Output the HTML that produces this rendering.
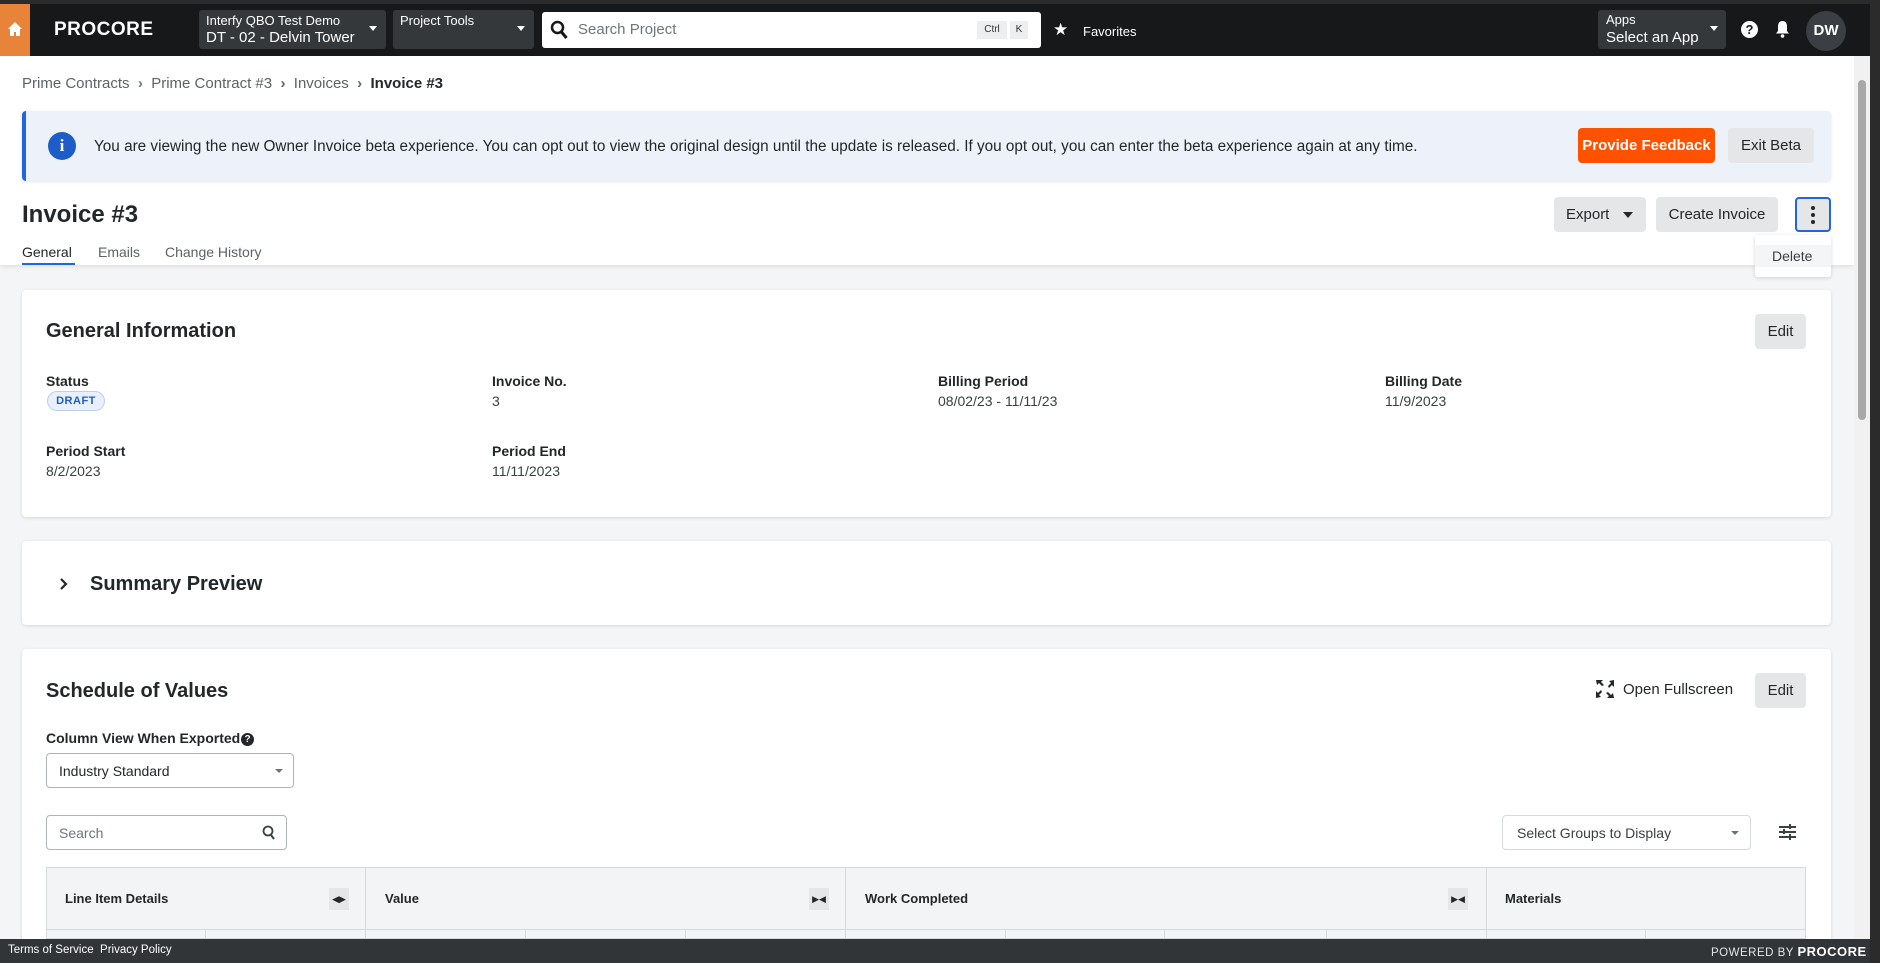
<!DOCTYPE html>
<html><head><meta charset="utf-8"><style>
*{box-sizing:border-box;margin:0;padding:0}
body{width:1880px;height:963px;overflow:hidden;background:#2b2b2b;font-family:"Liberation Sans",sans-serif;color:#232729;position:relative}
.a{position:absolute}
.top{left:0;top:4px;width:1870px;height:52px;background:#16181a}
.page{left:0;top:56px;width:1854px;height:883px;background:#f4f5f6;overflow:hidden}
.hdr{left:0;top:0;width:1854px;height:209px;background:#fff;box-shadow:0 2px 4px rgba(0,0,0,.08)}
.dd{background:#34383b;border-radius:3px;color:#fff}
.card{background:#fff;border-radius:4px;box-shadow:0 1px 3px rgba(0,0,0,.12)}
.btn{background:#e4e6e8;border-radius:4px;font-size:15px;color:#232729;display:flex;align-items:center;justify-content:center}
.lbl{font-size:14px;font-weight:bold}
.val{font-size:14px;color:#3b4043}
.h2{font-size:20px;font-weight:bold;color:#232729}
.th{font-size:13px;font-weight:bold}
.vl{width:1px;background:#d6dadc}
</style></head><body>
<div class="a top"></div>
<div class="a" style="left:0;top:4px;width:30px;height:52px;background:#e8843a"></div>
<svg class="a" style="left:7px;top:21px" width="16" height="16" viewBox="0 0 16 16"><path d="M8 1L1 8h2v7h4v-4h2v4h4V8h2z" fill="#fff"/></svg>
<div class="a" style="left:54px;top:19px;font-size:19px;font-weight:bold;color:#fff;letter-spacing:0.5px">PROCORE</div>
<div class="a dd" style="left:199px;top:10px;width:187px;height:39px"><div class="a" style="left:7px;top:3px;font-size:13px">Interfy QBO Test Demo</div><div class="a" style="left:7px;top:19px;font-size:15px">DT - 02 - Delvin Tower</div><div class="a" style="left:170px;top:16px;border:4px solid transparent;border-top:5px solid #fff"></div></div>
<div class="a dd" style="left:393px;top:10px;width:141px;height:39px"><div class="a" style="left:7px;top:3px;font-size:13px">Project Tools</div><div class="a" style="left:124px;top:16px;border:4px solid transparent;border-top:5px solid #fff"></div></div>
<div class="a" style="left:542px;top:12px;width:499px;height:36px;background:#fff;border-radius:3px"></div>
<svg class="a" style="left:550px;top:20px" width="18" height="20" viewBox="0 0 18 20"><circle cx="7.5" cy="7.5" r="5.5" stroke="#16181a" stroke-width="2.5" fill="none"/><path d="M11.5 12l5 6" stroke="#16181a" stroke-width="3"/></svg>
<div class="a" style="left:578px;top:21px;font-size:15px;color:#6a767c">Search Project</div>
<div class="a" style="left:977px;top:21px;width:30px;height:18px;background:#eceeef;font-size:10px;text-align:center;line-height:18px;color:#333">Ctrl</div>
<div class="a" style="left:1010px;top:21px;width:18px;height:18px;background:#eceeef;font-size:10px;text-align:center;line-height:18px;color:#333">K</div>
<div class="a" style="left:1053px;top:20px;font-size:17px;color:#fff">★</div>
<div class="a" style="left:1083px;top:24px;font-size:13px;color:#fff">Favorites</div>
<div class="a dd" style="left:1598px;top:10px;width:128px;height:39px"><div class="a" style="left:8px;top:2px;font-size:13px">Apps</div><div class="a" style="left:8px;top:19px;font-size:15px">Select an App</div><div class="a" style="left:112px;top:16px;border:4px solid transparent;border-top:5px solid #fff"></div></div>
<div class="a" style="left:1741px;top:21px;width:17px;height:17px;background:#fff;border-radius:50%;color:#16181a;font-size:13px;font-weight:bold;text-align:center;line-height:17px">?</div>
<svg class="a" style="left:1775px;top:20px" width="15" height="18" viewBox="0 0 15 18"><path d="M7.5 1C4.5 1 3 3.5 3 6v5l-2 2.5h13L12 11V6c0-2.5-1.5-5-4.5-5z" fill="#fff"/><circle cx="7.5" cy="16" r="1.8" fill="#fff"/></svg>
<div class="a" style="left:1806px;top:11px;width:40px;height:40px;border-radius:50%;background:#3b3e42;color:#fff;font-size:15px;font-weight:bold;text-align:center;line-height:40px">DW</div>

<div class="a page">
<div class="a hdr"></div>
<div class="a" style="left:22px;top:19px;font-size:15px;color:#5a6368">Prime Contracts&nbsp;&nbsp;<b style="color:#6a767c">›</b>&nbsp;&nbsp;Prime Contract #3&nbsp;&nbsp;<b>›</b>&nbsp;&nbsp;Invoices&nbsp;&nbsp;<b>›</b>&nbsp;&nbsp;<span style="color:#232729;font-weight:bold">Invoice #3</span></div>
<div class="a" style="left:22px;top:55px;width:1809px;height:70px;background:#edf2fa;border-left:4px solid #2066df;border-radius:4px;box-shadow:0 1px 3px rgba(0,0,0,.1)"></div>
<div class="a" style="left:48px;top:76px;width:28px;height:28px;border-radius:50%;background:#1d5cc9;color:#fff;font-family:'Liberation Serif',serif;font-weight:bold;font-size:17px;text-align:center;line-height:28px">i</div>
<div class="a" style="left:94px;top:82px;font-size:15.3px;color:#232729">You are viewing the new Owner Invoice beta experience. You can opt out to view the original design until the update is released. If you opt out, you can enter the beta experience again at any time.</div>
<div class="a btn" style="left:1578px;top:72px;width:137px;height:35px;background:#ff5200;color:#fff;font-weight:bold">Provide Feedback</div>
<div class="a btn" style="left:1728px;top:72px;width:86px;height:35px">Exit Beta</div>
<div class="a" style="left:22px;top:145px;font-size:24px;font-weight:bold">Invoice #3</div>
<div class="a" style="left:22px;top:188px;font-size:14px">General</div>
<div class="a" style="left:22px;top:207px;width:53px;height:2px;background:#2066df"></div>
<div class="a" style="left:98px;top:188px;font-size:14px;color:#5a6368">Emails</div>
<div class="a" style="left:165px;top:188px;font-size:14px;color:#5a6368">Change History</div>
<div class="a btn" style="left:1554px;top:141px;width:92px;height:35px;justify-content:flex-start;padding-left:12px">Export<span style="margin-left:14px;border:5px solid transparent;border-top:6px solid #232729;margin-top:6px"></span></div>
<div class="a btn" style="left:1656px;top:141px;width:122px;height:35px">Create Invoice</div>
<div class="a btn" style="left:1795px;top:141px;width:36px;height:35px;border:2px solid #2066df;flex-direction:column;gap:3px"><i style="width:4px;height:4px;border-radius:50%;background:#232729"></i><i style="width:4px;height:4px;border-radius:50%;background:#232729"></i><i style="width:4px;height:4px;border-radius:50%;background:#232729"></i></div>
<div class="a" style="left:1755px;top:179px;width:76px;height:42px;background:#fff;box-shadow:0 1px 4px rgba(0,0,0,.15);border-radius:3px"><div style="margin-top:10px;height:22px;background:#f4f5f6;font-size:14px;color:#3b4043;padding:3px 0 0 17px">Delete</div></div>

<div class="a card" style="left:22px;top:234px;width:1809px;height:227px"></div>
<div class="a h2" style="left:46px;top:264px">General Information</div>
<div class="a btn" style="left:1755px;top:258px;width:51px;height:35px">Edit</div>
<div class="a lbl" style="left:46px;top:317px">Status</div>
<div class="a" style="left:47px;top:335px;width:58px;height:20px;border:1px solid #b9d0f3;background:#e9f0fb;border-radius:10px;font-size:11px;font-weight:bold;color:#1d5cc9;text-align:center;line-height:18px;letter-spacing:.5px">DRAFT</div>
<div class="a lbl" style="left:492px;top:317px">Invoice No.</div><div class="a val" style="left:492px;top:337px">3</div>
<div class="a lbl" style="left:938px;top:317px">Billing Period</div><div class="a val" style="left:938px;top:337px">08/02/23 - 11/11/23</div>
<div class="a lbl" style="left:1385px;top:317px">Billing Date</div><div class="a val" style="left:1385px;top:337px">11/9/2023</div>
<div class="a lbl" style="left:46px;top:387px">Period Start</div><div class="a val" style="left:46px;top:407px">8/2/2023</div>
<div class="a lbl" style="left:492px;top:387px">Period End</div><div class="a val" style="left:492px;top:407px">11/11/2023</div>

<div class="a card" style="left:22px;top:485px;width:1809px;height:84px"></div>
<svg class="a" style="left:59px;top:521px" width="10" height="14" viewBox="0 0 10 14"><path d="M2 2l5 5-5 5" stroke="#232729" stroke-width="2.2" fill="none"/></svg>
<div class="a h2" style="left:90px;top:517px">Summary Preview</div>

<div class="a card" style="left:22px;top:593px;width:1809px;height:300px"></div>
<div class="a h2" style="left:46px;top:624px">Schedule of Values</div>
<svg class="a" style="left:1595px;top:623px" width="20" height="20" viewBox="0 0 20 20" fill="#232729"><path d="M1 1h7L6 3l3 3-2 1-3-3-2 2z"/><path d="M19 1v7l-2-2-3 3-1-2 3-3-2-2z"/><path d="M1 19v-7l2 2 3-3 1 2-3 3 2 2z"/><path d="M19 19h-7l2-2-3-3 2-1 3 3 2-2z"/></svg>
<div class="a" style="left:1623px;top:625px;font-size:15px;color:#232729">Open Fullscreen</div>
<div class="a btn" style="left:1755px;top:617px;width:51px;height:35px">Edit</div>
<div class="a lbl" style="left:46px;top:674px">Column View When Exported <span style="display:inline-block;width:13px;height:13px;border-radius:50%;background:#232729;color:#fff;font-size:10px;text-align:center;line-height:13px;vertical-align:1px;margin-left:-3px">?</span></div>
<div class="a" style="left:46px;top:697px;width:248px;height:35px;border:1px solid #acb5b9;border-radius:4px;background:#fff;font-size:14px;padding:9px 0 0 12px">Industry Standard<span class="a" style="left:228px;top:15px;border:4px solid transparent;border-top:4px solid #6a767c"></span></div>
<div class="a" style="left:46px;top:759px;width:241px;height:35px;border:1px solid #acb5b9;border-radius:4px;background:#fff;font-size:14px;color:#6a767c;padding:9px 0 0 12px">Search</div>
<svg class="a" style="left:262px;top:769px" width="14" height="16" viewBox="0 0 14 16"><circle cx="6" cy="6" r="4.5" stroke="#3b4043" stroke-width="1.8" fill="none"/><path d="M9 10l3 4" stroke="#3b4043" stroke-width="2"/></svg>
<div class="a" style="left:1502px;top:759px;width:249px;height:35px;border:1px solid #d6dadc;border-radius:4px;background:#fff;font-size:14px;color:#3b4043;padding:9px 0 0 14px">Select Groups to Display<span class="a" style="left:228px;top:15px;border:4px solid transparent;border-top:4px solid #6a767c"></span></div>
<svg class="a" style="left:1779px;top:768px" width="17" height="16" viewBox="0 0 17 16" fill="#3b4043"><rect x="0" y="2" width="17" height="2"/><rect x="0" y="7" width="17" height="2"/><rect x="0" y="12" width="17" height="2"/><rect x="10" y="0" width="2" height="5"/><rect x="4" y="5" width="2" height="5"/><rect x="10" y="10" width="2" height="6"/></svg>
<div class="a" style="left:46px;top:811px;width:1760px;height:72px;background:#f3f4f5;border:1px solid #d6dadc"></div>
<div class="a vl" style="left:365px;top:811px;height:72px"></div>
<div class="a vl" style="left:845px;top:811px;height:72px"></div>
<div class="a vl" style="left:1486px;top:811px;height:72px"></div>
<div class="a" style="left:46px;top:873px;width:1760px;height:1px;background:#d6dadc"></div>
<div class="a vl" style="left:205px;top:873px;height:10px"></div><div class="a vl" style="left:525px;top:873px;height:10px"></div><div class="a vl" style="left:685px;top:873px;height:10px"></div><div class="a vl" style="left:1005px;top:873px;height:10px"></div><div class="a vl" style="left:1164px;top:873px;height:10px"></div><div class="a vl" style="left:1326px;top:873px;height:10px"></div><div class="a vl" style="left:1645px;top:873px;height:10px"></div>
<div class="a th" style="left:65px;top:835px">Line Item Details</div>
<div class="a th" style="left:385px;top:835px">Value</div>
<div class="a th" style="left:865px;top:835px">Work Completed</div>
<div class="a th" style="left:1505px;top:835px">Materials</div>
<div class="a" style="left:329px;top:832px;width:20px;height:22px;background:#e4e6e8;font-size:9px;text-align:center;line-height:22px">◀▶</div>
<div class="a" style="left:809px;top:832px;width:20px;height:22px;background:#e4e6e8;font-size:9px;text-align:center;line-height:22px">▶◀</div>
<div class="a" style="left:1448px;top:832px;width:20px;height:22px;background:#e4e6e8;font-size:9px;text-align:center;line-height:22px">▶◀</div>
</div>
<div class="a" style="left:1854px;top:56px;width:16px;height:883px;background:#f1f1f1"></div>
<div class="a" style="left:1858px;top:80px;width:8px;height:340px;background:#a8a8a8;border-radius:4px"></div>
<div class="a" style="left:0;top:939px;width:1870px;height:24px;background:#323538"></div>
<div class="a" style="left:8px;top:944px;font-size:11.5px;color:#fff">Terms of Service&nbsp; Privacy Policy</div>
<div class="a" style="left:1711px;top:944px;font-size:11.5px;color:#e4e6e8;letter-spacing:.5px">POWERED BY <b style="font-size:13px;color:#fff">PROCORE</b></div>
</body></html>
